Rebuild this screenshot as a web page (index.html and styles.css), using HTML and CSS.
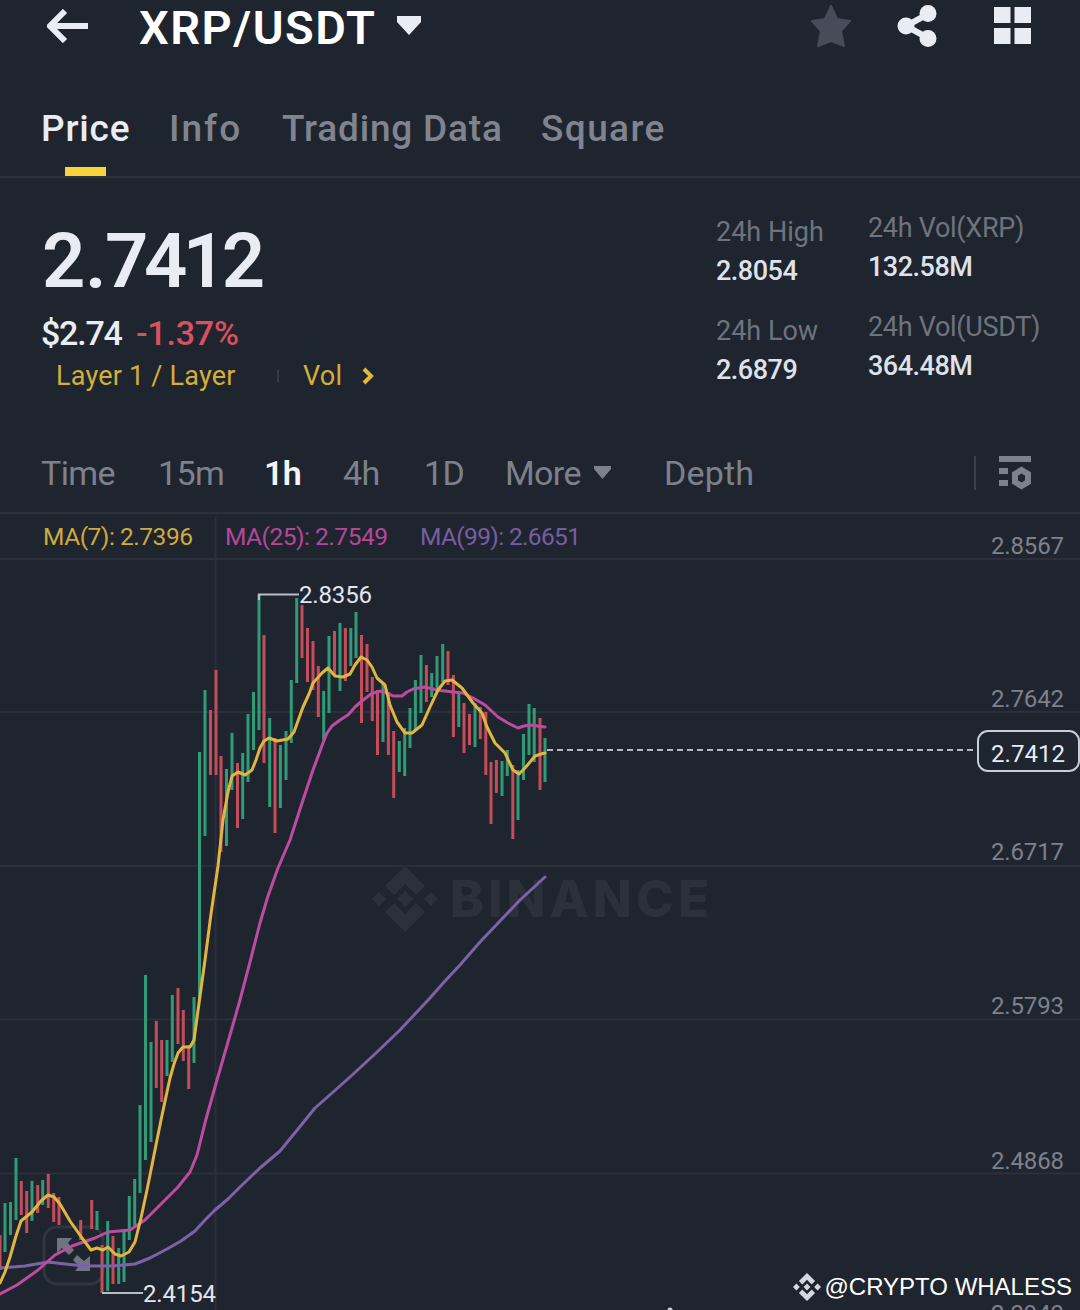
FILE: index.html
```html
<!DOCTYPE html>
<html lang="en">

<head>
    <meta charset="UTF-8">
    <meta name="viewport" content="width=device-width, initial-scale=1.0">
    <title>XRP/USDT | Price</title>
    <link rel="stylesheet" href="styles.css">
</head>

<body>

    <div class="header">
        <svg class="back-icon" viewBox="0 0 42 34" width="42" height="34">
            <path d="M18 2L3 17L18 32M3 17H41" />
        </svg>
        <h1 class="pair">XRP/USDT</h1>
        <svg class="pair-caret" viewBox="0 0 26 20" width="26" height="20">
            <path d="M1 0H25V6L13 19L1 6Z" />
        </svg>
        <div class="header-icons">
            <svg viewBox="0 0 42 44" width="42" height="44">
                <path class="star" d="M21 2L27 15L40 17L31 27L34 42L21 37L8 42L11 27L2 17L15 15Z" />
            </svg>
            <svg viewBox="0 0 40 44" width="40" height="44">
                <path class="share-line" d="M31 10L9 22L31 34" />
                <circle cx="9" cy="22" r="8.500" />
                <circle cx="31" cy="9.500" r="8.500" />
                <circle cx="31" cy="34.500" r="8.500" />
            </svg>
            <svg viewBox="0 0 37 37" width="37" height="37">
                <path d="M0 0H16.500V16H0ZM20.500 0H37V16H20.500ZM0 21H16.500V37H0ZM20.500 21H37V37H20.500Z" />
            </svg>
        </div>
    </div>

    <div class="tabs">
        <div class="tab active">Price</div>
        <div class="tab info">Info</div>
        <div class="tab data">Trading Data</div>
        <div class="tab square">Square</div>
    </div>

    <div class="summary">
        <div class="price-box">
            <div class="price">2<span class="point">.</span>7412</div>
            <div class="change"><span class="usd">$2.74</span><span class="percent">-1.37%</span></div>
            <div class="tags">
                <span class="layer">Layer 1 / Layer</span>
                <span class="tag-line"></span>
                <span class="vol">Vol</span>
                <svg viewBox="0 0 12 18" width="12" height="18">
                    <path d="M2 2L9 9L2 16" />
                </svg>
            </div>
        </div>
        <div class="stats">
            <div class="label high">24h High</div>
            <div class="value">2.8054</div>
            <div class="label low">24h Low</div>
            <div class="value">2.6879</div>
        </div>
        <div class="stats stats-vol">
            <div class="label">24h Vol(XRP)</div>
            <div class="value">132.58M</div>
            <div class="label">24h Vol(USDT)</div>
            <div class="value">364.48M</div>
        </div>
    </div>

    <div class="periods">
        <span>Time</span>
        <span>15m</span>
        <span class="active">1h</span>
        <span>4h</span>
        <span>1D</span>
        <span class="more">More
            <svg viewBox="0 0 17 14" width="17" height="14">
                <path d="M0 0H17V3L8.500 13L0 3Z" />
            </svg>
        </span>
        <span class="depth">Depth</span>
        <span class="settings">
            <svg viewBox="0 0 33 34" width="33" height="34">
                <path d="M0 0H32V6H0ZM0 12H9V18H0ZM0 24H9V30H0Z" />
                <path class="hexagon" d="M22.500 14L29 18V26L22.500 30L16 26V18Z" />
            </svg>
        </span>
    </div>

    <svg class="chart" viewBox="0 514 1080 796" width="1080" height="796">
        <!-- grid -->
        <path class="grid" d="M0 559H1080M0 712H1080M0 866H1080M0 1019.500H1080M0 1173.500H1080M215.500 517V1310" />

        <!-- watermark -->
        <g class="watermark">
            <path d="M405 866L425 886L416 895L405 884L394 895L385 886ZM405 932L425 912L416 903L405 914L394 903L385 912ZM379 892L386 899L379 906L372 899ZM431 892L438 899L431 906L424 899ZM405 891L413 899L405 907L397 899Z" />
            <text x="450" y="917" textLength="259">BINANCE</text>
        </g>

        <!-- fullscreen button -->
        <rect class="full-box" x="44" y="1227" width="59" height="57" rx="13" />
        <path class="full-arrow" d="M57 1238H72L68 1243L74 1250L69 1255L62 1248L57 1253ZM90 1271H75L79 1266L73 1260L77 1255L84 1261L90 1256Z" />

        <!-- candles -->
        <path class="up" d="M5 1203V1252M10.500 1202V1235M16 1158V1220M32 1181V1221M42.700 1180V1205M97 1211V1230M107.700 1221V1291M118.700 1248V1284M124 1230V1282M129.300 1196V1240M134.700 1179V1227M140 1105V1193M145.500 975V1160M151 1042V1142M167 1040V1076M172.300 995V1062M194 997V1063M199.500 752V1000M205 690V836M226.500 769V846M232 733V790M242.700 753V819M248 714V782M253.500 692V750M259 594V730M269.700 718V807M280.400 745V808M286 731V780M291.300 680V743M296.700 598V683M323.700 691V740M329 636V713M340 623V691M350.800 628V666M356 612V658M383 683V742M399.300 741V772M404.700 728V776M410 708V748M415.400 680V730M421 655V713M431.700 673V697M437 656V690M442.700 644V682M458.800 694V727M475 703V747M502 761V796M507.300 750V776M518 770V820M523.500 734V780M529 704V755M534.200 708V762M545 738V782" />
        <path class="down" d="M0 1235V1270M21.300 1181V1215M26.700 1191V1233M37.700 1185V1213M48.300 1174V1208M53.700 1193V1222M59 1197V1225M80.700 1220V1240M91.700 1200V1229M102 1245V1293M113 1236V1284M156.300 1021V1088M161.700 1040V1102M178 988V1044M183.300 1010V1061M188.700 1045V1089M210.500 710V775M216 670V775M221 756V852M237.500 763V828M264 635V763M275 738V833M302 605V658M307.500 628V682M313 641V690M318.300 666V717M334.500 631V676M345.400 628V681M361.500 635V723M367 644V692M372.300 677V721M377.500 690V755M388.400 692V755M393.700 731V798M426.400 665V702M448 651V685M453.400 675V737M464 703V753M469.500 714V745M480.300 707V739M485.800 712V775M491 762V824M496.400 760V793M512.800 765V839M540 718V790" />

        <!-- moving averages -->
        <polyline class="ma99" points="0,1268 25,1266 48,1262 65,1264 85,1266 113,1266 135,1264 150,1258 167,1249 181,1241 195,1231 205,1220 215,1210 228,1199 240,1187 260,1168 280,1151 298,1129 315,1108 332,1093 350,1077 376,1053 400,1030 415,1014 430,998 445,981 460,965 480,942 500,921 520,900 545,877" />
        <polyline class="ma25" points="0,1294 17,1285 38,1270 55,1255 72,1246 95,1238 108,1232 130,1230 145,1220 165,1200 178,1187 190,1172 197,1155 206,1119 217,1080 228,1042 240,1000 250,962 260,923 268,896 278,868 290,840 303,800 313,770 323,743 327,733 332,726 340,720 348,715 355,707 362,701 371,694 380,691 387,693 393,696 402,696 407,692 413,689 425,687 437,690 453,692 463,693 473,698 485,705 498,717 508,723 518,728 524,726 530,725 545,727" />
        <polyline class="ma7" points="0,1283 5,1272 10,1257 16,1236 21,1221 32,1212 41,1201 48,1195 54,1197 60,1204 70,1221 82,1238 91,1250 97,1248 103,1250 108,1247 115,1254 121,1256 129,1252 135,1242 141,1218 147,1190 153,1160 161,1120 170,1078 174,1064 178,1053 183,1047 190,1047 194,1040 197,1018 205,960 211,914 218,866 223,820 228,792 232,776 238,772 245,775 252,770 256,760 260,748 264,741 269,738 277,741 288,739 294,732 303,707 309,694 313,683 322,673 328,668 335,676 343,677 350,674 355,665 361,657 367,660 372,667 377,678 385,685 390,705 397,722 405,733 412,733 422,725 430,707 438,690 445,681 452,680 462,688 473,703 482,713 487,727 495,743 505,753 513,770 519,774 525,768 535,756 541,754 545,753" />

        <!-- ma legend -->
        <g class="legend">
            <text class="ma7-text" x="43" y="545" textLength="150">MA(7): 2.7396</text>
            <text class="ma25-text" x="225" y="545" textLength="163">MA(25): 2.7549</text>
            <text class="ma99-text" x="420" y="545" textLength="161">MA(99): 2.6651</text>
        </g>

        <!-- high and low marks -->
        <path class="mark-line" d="M259 600V594.500H299M102 1293H143" />
        <g class="mark">
            <text x="299" y="603" textLength="73">2.8356</text>
            <text x="143" y="1302" textLength="73">2.4154</text>
        </g>

        <!-- price axis -->
        <g class="axis">
            <text x="991" y="554" textLength="73">2.8567</text>
            <text x="991" y="707" textLength="73">2.7642</text>
            <text x="991" y="860" textLength="73">2.6717</text>
            <text x="991" y="1014" textLength="73">2.5793</text>
            <text x="991" y="1169" textLength="73">2.4868</text>
            <text x="991" y="1322" textLength="73">2.3943</text>
        </g>

        <!-- current price -->
        <path class="current-line" d="M547 750H977" />
        <rect class="current-box" x="978" y="731" width="101" height="40" rx="10" />
        <text class="current" x="991" y="762" textLength="74">2.7412</text>
        <circle class="dot" cx="670" cy="1310" r="2.500" />
    </svg>

    <div class="author">
        <svg viewBox="372 866 66 66" width="28" height="28">
            <path d="M405 866L424 885L416 893L405 882L394 893L386 885ZM405 932L424 913L416 905L405 916L394 905L386 913ZM380 891L388 899L380 907L372 899ZM430 891L438 899L430 907L422 899ZM405 891L413 899L405 907L397 899Z" />
        </svg>
        <span>@CRYPTO WHALESS</span>
    </div>

</body>

</html>
```
FILE: styles.css
```css
* {
    margin: 0;
    padding: 0;
    box-sizing: border-box;
}

body {
    position: relative;
    width: 1080px;
    height: 1310px;
    overflow: hidden;
    background-color: #1f252f;
    color: #eaecf4;
    font-family: Roboto, Inter, sans-serif;
}

svg {
    display: block;
    flex-shrink: 0;
}

.header {
    display: flex;
    align-items: center;
    height: 51px;
    padding: 0 49px 0 47px;
}

.back-icon {
    fill: none;
    stroke: #eaecf4;
    stroke-width: 6;
}

.pair {
    margin-left: 50px;
    width: 257px;
    padding-top: 4px;
    font-size: 47px;
    font-weight: 600;
    line-height: 51px;
    letter-spacing: 1.5px;
    color: #fff;
}

.pair-caret {
    fill: #eaecf4;
}

.header-icons {
    display: flex;
    align-items: center;
    margin-left: auto;
    fill: #eaecf4;
}

.header-icons svg:nth-child(2) {
    margin-left: 45px;
}

.header-icons svg:nth-child(3) {
    margin-left: 57px;
}

.header-icons .star {
    fill: #474c5a;
    stroke: #474c5a;
    stroke-width: 2;
    stroke-linejoin: round;
}

.share-line {
    fill: none;
    stroke: #eaecf4;
    stroke-width: 6;
}

.tabs {
    display: grid;
    grid-template-columns: 128px 113px 259px 1fr;
    height: 127px;
    padding: 55px 0 0 41px;
    border-bottom: 2px solid #2c313b;
}

.tab {
    font-size: 37px;
    font-weight: 500;
    line-height: 45px;
    letter-spacing: 0.8px;
    color: #80848f;
}

.tab.info {
    letter-spacing: 2px;
}

.tab.square {
    letter-spacing: 1.4px;
}

.tab.active {
    color: #eaecf4;
}

.tab.active::after {
    content: "";
    display: block;
    width: 41px;
    height: 9px;
    margin: 16px 0 0 24px;
    background-color: #f8d33a;
}

.summary {
    display: flex;
    height: 256px;
    padding-left: 42px;
}

.price-box {
    width: 674px;
    padding-top: 44px;
}

.price {
    font-size: 76px;
    font-weight: 600;
    line-height: 78px;
    letter-spacing: -4.5px;
}

.point {
    margin: 0 3px 0 4px;
}

.change {
    margin-top: 14px;
    font-size: 34px;
    font-weight: 500;
    line-height: 38px;
}

.usd {
    display: inline-block;
    width: 95px;
    margin-left: -1px;
    letter-spacing: -1.2px;
}

.percent {
    color: #d9505f;
    letter-spacing: -0.2px;
}

.tags {
    display: flex;
    align-items: center;
    margin-top: 9px;
    padding-left: 14px;
    font-size: 27px;
    line-height: 30px;
    letter-spacing: 0.2px;
    color: #d3ae3a;
}

.layer {
    width: 221px;
}

.tag-line {
    width: 2px;
    height: 12px;
    background-color: #363b46;
}

.vol {
    width: 59px;
    margin-left: 24px;
}

.tags svg {
    fill: none;
    stroke: #e0b93a;
    stroke-width: 4;
}

.stats {
    width: 152px;
    padding-top: 35px;
    font-size: 27px;
    line-height: 39px;
    white-space: nowrap;
}

.stats-vol {
    padding-top: 31px;
}

.label {
    color: #6e737e;
}

.stats-vol .label {
    letter-spacing: -0.3px;
}

.value {
    font-weight: 500;
    letter-spacing: -0.5px;
    color: #dfe2ea;
}

.value:nth-child(2) {
    margin-bottom: 21px;
}

.periods {
    display: grid;
    grid-template-columns: 117px 106px 79px 81px 81px 159px 310px 1fr;
    align-items: center;
    height: 80px;
    padding-left: 41px;
    border-bottom: 2px solid #2c313b;
    font-size: 34px;
    letter-spacing: -0.6px;
    color: #7d818c;
}

.periods .active {
    font-weight: 600;
    color: #f3f5fa;
}

.periods .depth {
    letter-spacing: 0.2px;
}

.more {
    display: flex;
    align-items: center;
    gap: 13px;
}

.periods svg {
    fill: #7d818c;
}

.settings {
    height: 34px;
    padding-left: 23px;
    border-left: 2px solid #3a3f4a;
}

.settings .hexagon {
    fill: none;
    stroke: #7d818c;
    stroke-width: 6;
}

.grid {
    fill: none;
    stroke: #2a2f39;
    stroke-width: 2;
}

.watermark {
    fill: #2b303a;
    font-family: Inter, sans-serif;
    font-size: 51px;
    font-weight: 800;
}

.full-box {
    fill: none;
    stroke: #30353f;
    stroke-width: 3;
}

.full-arrow {
    fill: #6f7480;
}

.up,
.down {
    fill: none;
    stroke-width: 3;
}

.up {
    stroke: #319b77;
}

.down {
    stroke: #c44d5b;
}

.ma7,
.ma25,
.ma99 {
    fill: none;
    stroke-width: 3;
    stroke-linejoin: round;
    stroke-linecap: round;
}

.ma7 {
    stroke: #e0b640;
}

.ma25 {
    stroke: #bd4b9f;
}

.ma99 {
    stroke: #7c62a8;
}

.legend {
    font-size: 24.5px;
}

.ma7-text {
    fill: #cdab3c;
}

.ma25-text {
    fill: #b5479a;
}

.ma99-text {
    fill: #765ea0;
}

.mark-line {
    fill: none;
    stroke: #b9bdc7;
    stroke-width: 2;
}

.mark {
    font-size: 24px;
    fill: #e4e6ee;
}

.axis {
    font-size: 24px;
    fill: #7d818c;
}

.current-line {
    stroke: #b4b8c2;
    stroke-width: 2;
    stroke-dasharray: 6 4;
}

.current-box {
    fill: #1f252f;
    stroke: #c9cdd6;
    stroke-width: 2;
}

.current {
    font-size: 24px;
    fill: #eaecf4;
}

.dot {
    fill: #c9cdd6;
}

.author {
    position: absolute;
    right: 8px;
    bottom: 9px;
    display: flex;
    align-items: center;
    gap: 3px;
    font-family: "Liberation Sans", Arial, sans-serif;
    font-size: 24px;
    line-height: 29px;
    color: #fff;
}

.author svg {
    fill: #d5d8df;
}
```
